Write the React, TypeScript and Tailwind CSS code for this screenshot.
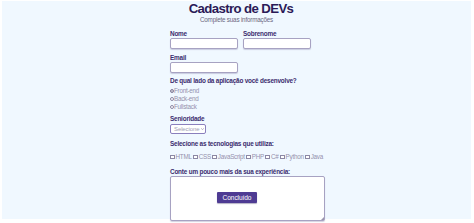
import { useState } from 'react';

const TECHS = ['HTML', 'CSS', 'JavaScript', 'PHP', 'C#', 'Python', 'Java'];
const SIDES = ['Front-end', 'Back-end', 'Fullstack'];

const font = { fontFamily: '"Liberation Sans", Arial, sans-serif' };

function Label({ children, className = '' }: { children: React.ReactNode; className?: string }) {
  return (
    <label className={`block text-[6.4px] leading-[8px] tracking-[-0.2px] font-bold text-[#3b2c6e] ${className}`}>
      {children}
    </label>
  );
}

function TextInput({ type = 'text' }: { type?: string }) {
  return (
    <input
      type={type}
      className="block w-[68px] h-[11px] bg-white border border-[#a7a2c2] rounded-[2px] shadow-[0_1px_1px_rgba(80,70,130,0.25)] outline-none"
    />
  );
}

export default function App() {
  const [side, setSide] = useState('Front-end');
  const [techs, setTechs] = useState<string[]>([]);

  const toggleTech = (tech: string) => {
    setTechs((prev) => (prev.includes(tech) ? prev.filter((t) => t !== tech) : [...prev, tech]));
  };

  return (
    <div className="w-[474px] h-[223px] bg-white pt-[1px] pl-[2px] pr-[3px] overflow-hidden" style={font}>
      <div className="h-[218px] bg-[#f0f8ff]">
        <div className="flex flex-col items-center">
          <h1 className="text-[13.2px] leading-[14px] tracking-[-0.6px] font-bold text-[#2b1a57] mt-[1px] ml-[9px]">
            Cadastro de DEVs
          </h1>
          <p className="text-[6.3px] leading-[8px] tracking-[-0.2px] text-[#6b6680]">Complete suas informações</p>
        </div>

        <form className="ml-[168px] w-[160px]" onSubmit={(e) => e.preventDefault()}>
          <div className="flex gap-[5px] mt-[6px]">
            <div>
              <Label>Nome</Label>
              <TextInput />
            </div>
            <div>
              <Label>Sobrenome</Label>
              <TextInput />
            </div>
          </div>

          <Label className="mt-[5px]">Email</Label>
          <TextInput type="email" />

          <Label className="mt-[4px]">De qual lado da aplicação você desenvolve?</Label>
          <div className="mt-[2px]">
            {SIDES.map((s) => (
              <label key={s} className="flex items-center h-[8px] text-[6.3px] leading-[8px] tracking-[-0.25px] text-[#9591ad]">
                <input
                  type="radio"
                  name="side"
                  checked={side === s}
                  onChange={() => setSide(s)}
                  className="appearance-none w-[4px] h-[4px] rounded-full border-[0.5px] border-[#8c88a4] bg-white checked:bg-[#3a3550] checked:shadow-[inset_0_0_0_0.7px_white] m-0"
                />
                {s}
              </label>
            ))}
          </div>

          <Label className="mt-[4px]">Senioridade</Label>
          <div className="relative mt-[1px] w-[36px] h-[10px]">
            <select className="appearance-none block w-full h-full bg-white border border-[#8a7fbd] rounded-[2px] text-[6px] leading-[8px] tracking-[-0.1px] text-[#a3a0b6] pl-[3px] outline-none">
              <option>Selecione</option>
              <option>Júnior</option>
              <option>Pleno</option>
              <option>Sênior</option>
            </select>
            <svg className="absolute right-[2.5px] top-[4px] pointer-events-none" width="3" height="2" viewBox="0 0 6 4">
              <path d="M0.5 0.5 L3 3.5 L5.5 0.5" fill="none" stroke="#8d89a6" strokeWidth="1.2" />
            </svg>
          </div>

          <Label className="mt-[6px]">Selecione as tecnologias que utiliza:</Label>
          <div className="flex items-center gap-[1.5px] mt-[5px] whitespace-nowrap">
            {TECHS.map((t) => (
              <label key={t} className="flex items-center h-[8px] text-[6.3px] leading-[8px] tracking-[-0.25px] text-[#9591ad]">
                <input
                  type="checkbox"
                  checked={techs.includes(t)}
                  onChange={() => toggleTech(t)}
                  className="appearance-none w-[4.5px] h-[4.5px] border-[0.5px] border-[#8c88a4] bg-white checked:bg-[#4a3a8f] m-0 mr-[1px]"
                />
                {t}
              </label>
            ))}
          </div>

          <Label className="mt-[7px]">Conte um pouco mais da sua experiência:</Label>
          <div className="relative w-[155px] h-[45px]">
            <textarea className="block w-full h-full resize-none bg-white border border-[#a7a2c2] rounded-[2px] shadow-[0_1px_1px_rgba(80,70,130,0.25)] outline-none" />
            <svg className="absolute right-[1px] bottom-[1px] pointer-events-none" width="3" height="3" viewBox="0 0 3 3">
              <path d="M3 0 L3 3 L0 3 Z" fill="#9a96ad" />
            </svg>
            <button
              type="submit"
              className="absolute left-[47px] top-[16px] w-[40px] h-[11px] bg-[#4e3b93] text-white text-[6.6px] leading-[11px] tracking-[-0.1px] rounded-[1px] shadow-[0_1px_1px_rgba(40,30,90,0.35)]"
            >
              Concluído
            </button>
          </div>
        </form>
      </div>
    </div>
  );
}
